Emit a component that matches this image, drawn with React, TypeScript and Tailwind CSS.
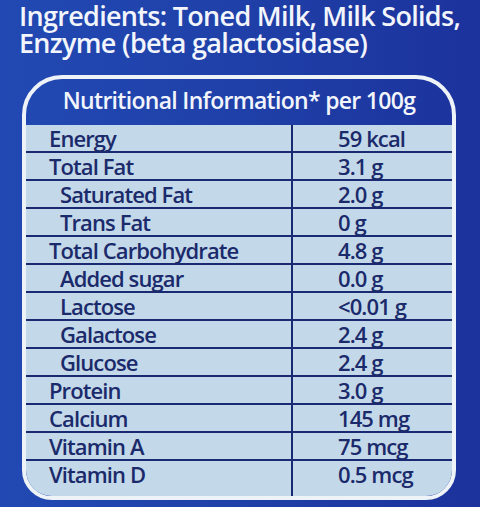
import * as React from 'react'

const rows: { label: string; value: string; indent?: boolean }[] = [
  { label: 'Energy', value: '59 kcal' },
  { label: 'Total Fat', value: '3.1 g' },
  { label: 'Saturated Fat', value: '2.0 g', indent: true },
  { label: 'Trans Fat', value: '0 g', indent: true },
  { label: 'Total Carbohydrate', value: '4.8 g' },
  { label: 'Added sugar', value: '0.0 g', indent: true },
  { label: 'Lactose', value: '<0.01 g', indent: true },
  { label: 'Galactose', value: '2.4 g', indent: true },
  { label: 'Glucose', value: '2.4 g', indent: true },
  { label: 'Protein', value: '3.0 g' },
  { label: 'Calcium', value: '145 mg' },
  { label: 'Vitamin A', value: '75 mcg' },
  { label: 'Vitamin D', value: '0.5 mcg' },
]

export default function App() {
  return (
    <main
      className="w-[480px] h-[507px] overflow-hidden bg-gradient-to-r from-[#2249b3] via-[#1f40a8] to-[#1c329c] text-white"
      style={{ fontFamily: '"Open Sans", "Noto Sans", sans-serif' }}
    >
      <div className="pl-[19px] pt-[2px] text-[27px] leading-[27px] font-semibold tracking-[-0.7px] text-[#f2f5fb] whitespace-nowrap">
        <div>Ingredients: Toned Milk, Milk Solids,</div>
        <div>Enzyme (beta galactosidase)</div>
      </div>

      <div className="ml-[22px] mt-[19px] w-[434px] border-4 border-[#eef3f8] rounded-t-[40px] rounded-b-[30px] overflow-hidden">
        <div className="h-[46px] flex items-center justify-center text-[23px] font-semibold tracking-[-0.7px] text-[#f2f5fb] pb-[3px] whitespace-nowrap">
          Nutritional Information* per 100g
        </div>
        <div className="bg-[#c3d9e9] text-[#1b2a6b]">
          {rows.map((r, i) => {
            const last = i === rows.length - 1
            return (
              <div
                key={r.label}
                className={'flex ' + (last ? 'h-[35px]' : 'h-[28px] border-b-2 border-[#1a2a72]')}
              >
                <div
                  className={
                    'w-[267px] border-r-2 border-[#1a2a72] text-[22px] leading-[27px] font-semibold tracking-[-0.9px] ' +
                    (r.indent ? 'pl-[34px]' : 'pl-[23px]')
                  }
                >
                  {r.label}
                </div>
                <div className="pl-[45px] text-[22px] leading-[27px] font-semibold tracking-[-0.9px]">
                  {r.value}
                </div>
              </div>
            )
          })}
        </div>
      </div>
    </main>
  )
}
